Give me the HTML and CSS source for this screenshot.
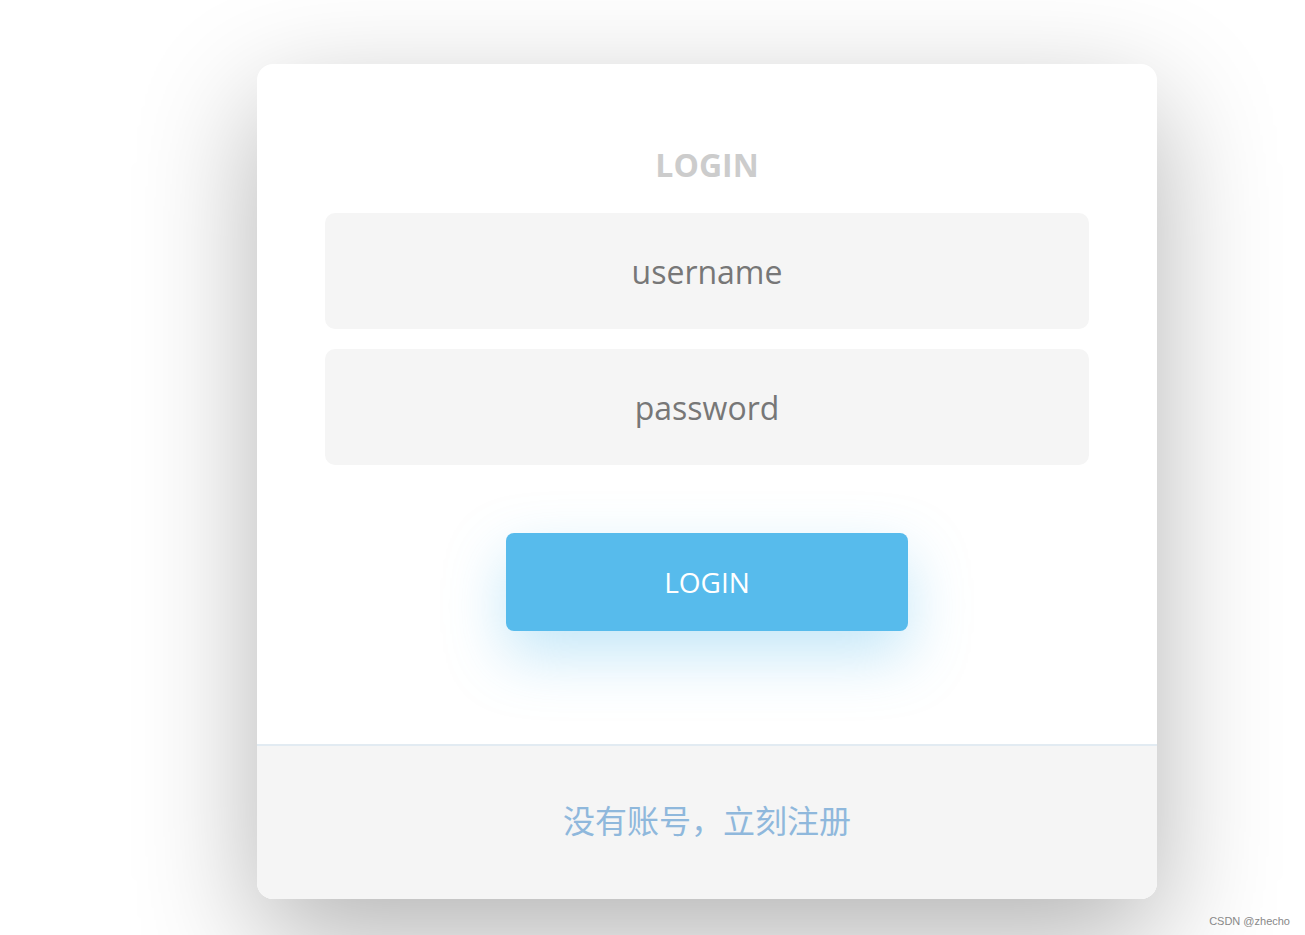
FILE: index.html
```html
<!DOCTYPE html>
<html lang="zh-CN">
<head>
  <meta charset="UTF-8">
  <meta name="viewport" content="width=device-width, initial-scale=1.0">
  <title>登录</title>
  <link rel="stylesheet" href="styles.css">
</head>
<body>

  <div class="login-box">
    <div class="login-main">
      <h2 class="login-title">LOGIN</h2>
      <input type="text" class="login-input" placeholder="username">
      <input type="password" class="login-input" placeholder="password">
      <button class="login-btn">LOGIN</button>
    </div>
    <div class="login-footer">
      <a href="#" class="register-link">没有账号，立刻注册</a>
    </div>
  </div>

  <div class="watermark">CSDN @zhecho</div>

</body>
</html>
```

FILE: styles.css
```css
html, body {
  height: 100%;
}
body {
  margin: 0;
  background-color: #fff;
  font-family: "Open Sans", "Noto Sans", "Noto Sans CJK SC", sans-serif;
  overflow: hidden;
  position: relative;
}
.login-box {
  width: 900px;
  margin: 64px 0 0 257px;
  background-color: #fff;
  border-radius: 16px;
  overflow: hidden;
  box-shadow: 0 40px 120px rgba(0,0,0,0.3);
}
.login-main {
  display: flex;
  flex-direction: column;
  align-items: center;
  padding: 81px 68px 113px;
}
.login-title {
  margin: 0 0 28px 0;
  font-size: 32px;
  line-height: 40px;
  font-weight: bold;
  color: #ccc;
}
.login-input {
  width: 100%;
  height: 116px;
  box-sizing: border-box;
  border: none;
  outline: none;
  border-radius: 10px;
  background-color: #f5f5f5;
  text-align: center;
  font-family: inherit;
  font-size: 32px;
  color: #777;
  margin-bottom: 20px;
}
.login-input::placeholder {
  color: #777;
}
.login-btn {
  width: 402px;
  height: 98px;
  margin-top: 48px;
  border: none;
  border-radius: 8px;
  background-color: #57bbec;
  color: #fff;
  font-family: inherit;
  font-size: 28px;
  cursor: pointer;
  box-shadow: 0 24px 60px rgba(87,187,236,0.35);
}
.login-footer {
  height: 155px;
  box-sizing: border-box;
  padding-bottom: 7px;
  border-top: 2px solid #e2ebf2;
  background-color: #f5f5f5;
  display: flex;
  align-items: center;
  justify-content: center;
}
.register-link {
  font-family: "Noto Sans CJK SC", sans-serif;
  font-size: 32px;
  color: #8fb8dc;
  text-decoration: none;
}
.watermark {
  position: absolute;
  right: 15px;
  bottom: 8px;
  font-family: "Liberation Sans", sans-serif;
  font-size: 11px;
  color: #888;
}
```
